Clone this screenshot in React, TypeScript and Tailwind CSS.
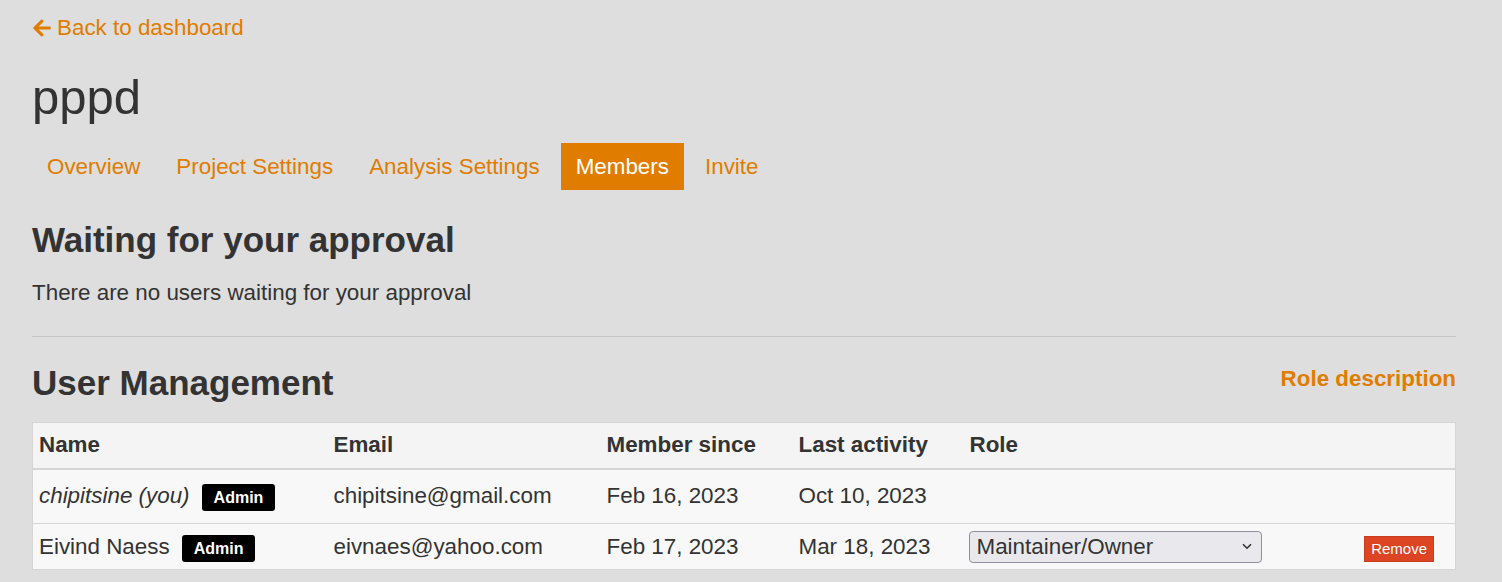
import { FaArrowLeft } from 'react-icons/fa'

const members = [
  { name: 'chipitsine (you)', you: true, email: 'chipitsine@gmail.com', since: 'Feb 16, 2023', last: 'Oct 10, 2023' },
  { name: 'Eivind Naess', you: false, email: 'eivnaes@yahoo.com', since: 'Feb 17, 2023', last: 'Mar 18, 2023' },
]

const tabs = ['Overview', 'Project Settings', 'Analysis Settings', 'Members', 'Invite']

export default function App() {
  return (
    <div className="min-h-[582px] bg-[#dedede] px-[32px] text-[#333] font-['Liberation_Sans',Arial,sans-serif]">
      <div className="w-[1424px]">
        {/* Back link */}
        <a href="#" className="flex items-center gap-[5px] pt-[14px] text-[22.4px] leading-[28px] text-[#e07c00]">
          <FaArrowLeft className="h-[20px] w-[20px]" />
          <span>Back to dashboard</span>
        </a>

        <h1 className="mt-[27px] text-[49px] leading-[56px]">pppd</h1>

        {/* Tabs */}
        <nav className="mt-[18px] flex gap-[6px]">
          {tabs.map((t) => (
            <a
              key={t}
              href="#"
              className={
                t === 'Members'
                  ? 'h-[47px] bg-[#e07c00] px-[15px] text-[22.4px] leading-[47px] text-white'
                  : 'h-[47px] px-[15px] text-[22.4px] leading-[47px] text-[#e07c00]'
              }
            >
              {t}
            </a>
          ))}
        </nav>

        {/* Waiting */}
        <h2 className="mt-[29px] text-[35px] font-bold leading-[42px]">Waiting for your approval</h2>
        <p className="mt-[18px] text-[22.4px] leading-[28px]">There are no users waiting for your approval</p>

        <hr className="mt-[29px] border-t border-[#c6c6c6]" />

        {/* User management */}
        <div className="mt-[22px] flex items-start justify-between">
          <h2 className="text-[35px] font-bold leading-[48px]">User Management</h2>
          <a href="#" className="text-[22.4px] font-bold leading-[40px] text-[#e07c00]">Role description</a>
        </div>

        <table className="mt-[15px] w-full table-fixed border-collapse border border-[#d6d6d6] text-[22.4px]">
          <colgroup>
            <col className="w-[294px]" />
            <col className="w-[273px]" />
            <col className="w-[192px]" />
            <col className="w-[171px]" />
            <col className="w-[340px]" />
            <col />
          </colgroup>
          <thead>
            <tr className="h-[46px] border-b-[2px] border-[#d6d6d6] bg-[#f4f4f4] text-left">
              <th className="px-[6px] font-bold">Name</th>
              <th className="px-[7px] font-bold">Email</th>
              <th className="px-[7px] font-bold">Member since</th>
              <th className="px-[7px] font-bold">Last activity</th>
              <th className="px-[7px] font-bold">Role</th>
              <th />
            </tr>
          </thead>
          <tbody>
            {members.map((m) => (
              <tr key={m.email} className={m.you ? 'h-[55px] border-b border-[#d6d6d6] bg-[#f8f8f8]' : 'h-[46px] bg-[#f8f8f8]'}>
                <td className="px-[6px]">
                  <span className={m.you ? 'italic' : ''}>{m.name}</span>
                  <span className="ml-[12px] inline-block rounded-[3px] bg-black px-[12px] align-[0px] text-[16px] font-bold leading-[27px] text-white">
                    Admin
                  </span>
                </td>
                <td className="px-[7px]">{m.email}</td>
                <td className="px-[7px]">{m.since}</td>
                <td className="px-[7px]">{m.last}</td>
                <td className="px-[6px]">
                  {!m.you && (
                    <div className="relative h-[32px] w-[293px] rounded-[4px] border border-[#8f8f9d] bg-[#e9e9ed]">
                      <span className="absolute left-[7px] top-0 leading-[30px]">Maintainer/Owner</span>
                      <svg className="absolute right-[9px] top-[11px]" width="10" height="7" viewBox="0 0 10 7" fill="none">
                        <path d="M1 1.2l4 4 4-4" stroke="#333" strokeWidth="1.6" />
                      </svg>
                    </div>
                  )}
                </td>
                <td className="pr-[21px] text-right">
                  {!m.you && (
                    <button className="h-[26px] border border-[#c93d1e] bg-[#dc4423] px-[6px] text-[15px] leading-[24px] text-white">Remove</button>
                  )}
                </td>
              </tr>
            ))}
          </tbody>
        </table>
      </div>
    </div>
  )
}
